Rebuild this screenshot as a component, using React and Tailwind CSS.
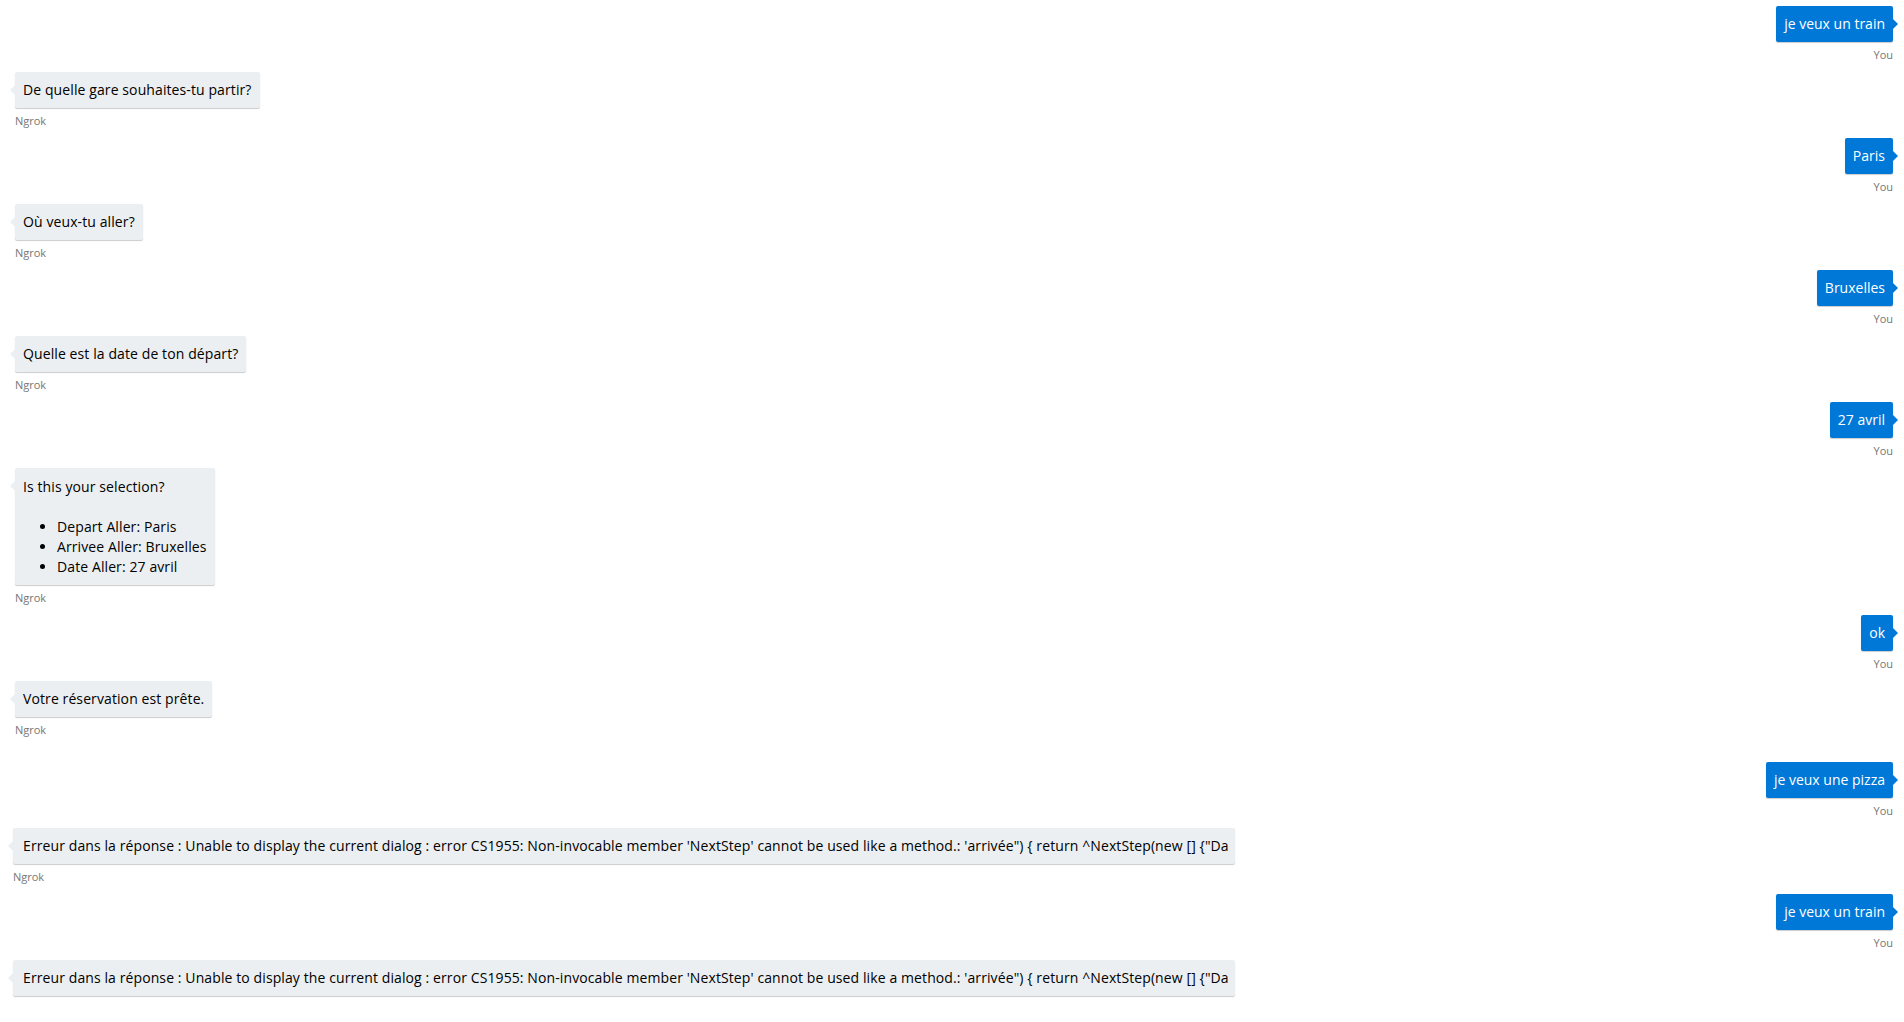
import React from "react";

const errorText =
    "Erreur dans la réponse : Unable to display the current dialog : error CS1955: Non-invocable member 'NextStep' cannot be used like a method.: 'arrivée\") { return ^NextStep(new [] {\"Da";

const messages = [
    { from: "user", text: "je veux un train" },
    { from: "bot", text: "De quelle gare souhaites-tu partir?" },
    { from: "user", text: "Paris" },
    { from: "bot", text: "Où veux-tu aller?" },
    { from: "user", text: "Bruxelles" },
    { from: "bot", text: "Quelle est la date de ton départ?" },
    { from: "user", text: "27 avril" },
    {
        from: "bot",
        title: "Is this your selection?",
        items: ["Depart Aller: Paris", "Arrivee Aller: Bruxelles", "Date Aller: 27 avril"],
    },
    { from: "user", text: "ok" },
    { from: "bot", text: "Votre réservation est prête.", extra: true },
    { from: "user", text: "je veux une pizza" },
    { from: "bot", error: true, text: errorText },
    { from: "user", text: "je veux un train" },
    { from: "bot", error: true, noLabel: true, text: errorText },
];

const Callout = ({ side, color }) => (
    <svg
        width="6"
        height="12"
        viewBox="0 0 6 12"
        className={side === "left" ? "absolute -left-[5px] top-[12px]" : "absolute -right-[5px] top-[12px]"}
    >
        {side === "left" ? (
            <path d="M6 0 L0 6 L6 12 Z" fill={color} />
        ) : (
            <path d="M0 0 L6 6 L0 12 Z" fill={color} />
        )}
    </svg>
);

const BotMessage = ({ msg }) => (
    <div className={msg.extra ? "flex flex-col items-start mb-[25px]" : "flex flex-col items-start mb-[10px]"}>
        <div
            className={
                msg.error
                    ? "relative ml-[13px] w-[1222px] bg-[#eceff1] rounded-[2px] shadow-[0_1px_1px_rgba(0,0,0,0.2)] px-[10px] py-2 text-[14px] leading-[20px] tracking-[0.1px] text-black"
                    : "relative ml-[15px] bg-[#eceff1] rounded-[2px] shadow-[0_1px_1px_rgba(0,0,0,0.2)] px-2 py-2 text-[14px] leading-[20px] tracking-[0.1px] text-black"
            }
        >
            <Callout side="left" color="#eceff1" />
            {msg.title ? (
                <div className="pt-[1px]">
                    <p className="mb-[20px]">{msg.title}</p>
                    <ul className="list-disc pl-[34px]">
                        {msg.items.map((item, i) => (
                            <li key={i}>{item}</li>
                        ))}
                    </ul>
                </div>
            ) : (
                <div className={msg.error ? "whitespace-nowrap" : ""}>{msg.text}</div>
            )}
        </div>
        {!msg.noLabel && (
            <span className={msg.error ? "ml-[13px] mt-[6px] text-[11px] leading-[14px] text-[#767676]" : "ml-[15px] mt-[6px] text-[11px] leading-[14px] text-[#767676]"}>
                Ngrok
            </span>
        )}
    </div>
);

const UserMessage = ({ msg }) => (
    <div className="flex flex-col items-end mb-[10px] mr-[11px]">
        <div className="relative bg-[#0078d7] rounded-[2px] shadow-[0_1px_1px_rgba(0,0,0,0.2)] px-2 py-2 text-[14px] leading-[20px] text-white">
            <Callout side="right" color="#0078d7" />
            {msg.text}
        </div>
        <span className="mt-[6px] text-[11px] leading-[14px] text-[#767676]">You</span>
    </div>
);

export default function App() {
    return (
        <div
            className="h-screen w-full overflow-hidden bg-white pt-[6px]"
            style={{ fontFamily: '"Open Sans", "Noto Sans", sans-serif' }}
        >
            {messages.map((msg, index) =>
                msg.from === "user" ? (
                    <UserMessage key={index} msg={msg} />
                ) : (
                    <BotMessage key={index} msg={msg} />
                )
            )}
        </div>
    );
}
